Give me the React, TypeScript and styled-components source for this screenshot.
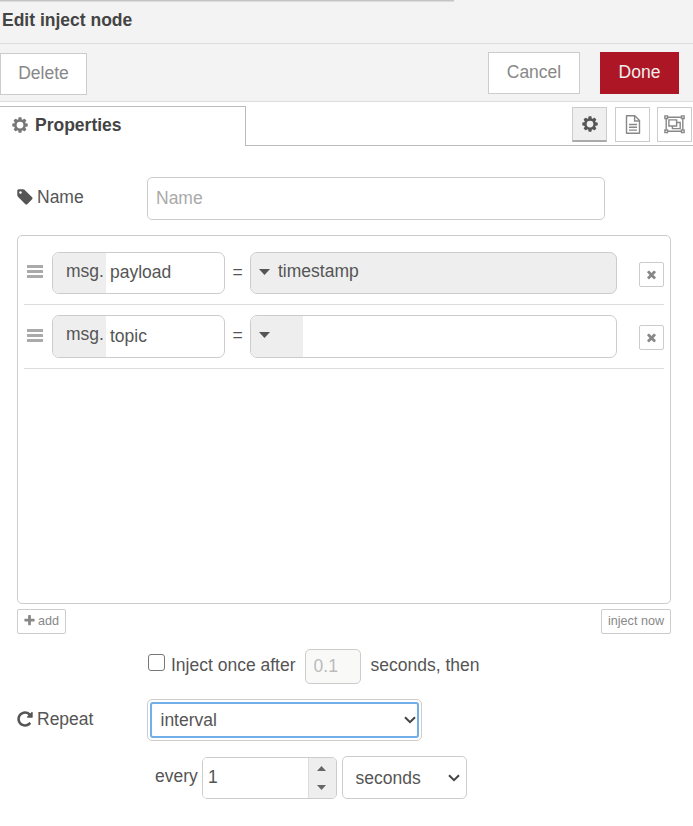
import React from "react";
import styled, { createGlobalStyle, css } from "styled-components";

const GlobalStyle = createGlobalStyle`
  * { box-sizing: border-box; }
  body {
    margin: 0;
    background: #fff;
    color: #555;
    font: 17.5px/20px "Liberation Sans", Arial, sans-serif;
  }
  input, select, button { font: inherit; color: inherit; margin: 0; }
`;

const glyphs = {
  cog: "M1232 896a336 336 0 1 0 -672 0a336 336 0 1 0 672 0zm432-109v222q0 12-8 23t-20 13l-185 28q-19 54-39 91 35 50 107 138 10 12 10 25t-9 23q-27 37-99 108t-94 71q-12 0-26-9l-138-108q-44 23-91 38-16 136-29 186-7 28-36 28h-222q-14 0-24.5-8.5t-11.5-21.5l-28-184q-49-16-90-37l-141 107q-10 9-25 9-14 0-25-11-126-114-165-168-7-10-7-23 0-12 8-23 15-21 51-66.5t54-70.5q-27-50-41-99l-183-27q-13-2-21-12.5t-8-23.5v-222q0-12 8-23t19-13l186-28q14-46 39-92-40-57-107-138-10-12-10-24 0-10 9-23 26-36 98.5-107.5t94.5-71.5q13 0 26 10l138 107q44-23 91-38 16-136 29-186 7-28 36-28h222q14 0 24.5 8.5t11.5 21.5l28 184q49 16 90 37l142-107q9-9 24-9 13 0 25 10 129 119 165 170 7 8 7 22 0 12-8 23-15 21-51 66.5t-54 70.5q26 50 41 98l183 28q13 2 21 12.5t8 23.5z",
  tag: "M576 448q0-53-37.5-90.5t-90.5-37.5-90.5 37.5-37.5 90.5 37.5 90.5 90.5 37.5 90.5-37.5 37.5-90.5zm1067 576q0 53-37 90l-491 492q-39 37-91 37-53 0-90-37l-715-716q-38-37-64.5-101t-26.5-117v-416q0-52 38-90t90-38h416q53 0 117 26.5t102 64.5l715 714q37 39 37 91z",
  times: "M1490 1322q0 40-28 68l-136 136q-28 28-68 28t-68-28l-294-294-294 294q-28 28-68 28t-68-28l-136-136q-28-28-28-68t28-68l294-294-294-294q-28-28-28-68t28-68l136-136q28-28 68-28t68 28l294 294 294-294q28-28 68-28t68 28l136 136q28 28 28 68t-28 68l-294 294 294 294q28 28 28 68z",
  plus: "M1600 736v192q0 40-28 68t-68 28h-416v416q0 40-28 68t-68 28h-192q-40 0-68-28t-28-68v-416h-416q-40 0-68-28t-28-68v-192q0-40 28-68t68-28h416v-416q0-40 28-68t68-28h192q40 0 68 28t28 68v416h416q40 0 68 28t28 68z",
  repeat:
    "M1664 256v448q0 26-19 45t-45 19h-448q-42 0-59-40-17-39 14-69l138-138q-148-137-349-137-104 0-198.5 40.5t-163.5 109.5-109.5 163.5-40.5 198.5 40.5 198.5 109.5 163.5 163.5 109.5 198.5 40.5q119 0 225-52t179-147q7-10 23-12 15 0 25 9l137 138q9 8 9.5 20.5t-7.5 22.5q-109 132-264 204.5t-327 72.5q-156 0-298-61t-245-164-164-245-61-298 61-298 164-245 245-164 298-61q147 0 284.5 55.5t244.5 156.5l130-129q29-31 70-14 39 17 39 59z",
};

const IconSvg = styled.svg`
  display: block;
  flex: none;
  fill: currentColor;
  overflow: visible;
`;

const Icon = ({ name, size = 18 }: { name: keyof typeof glyphs; size?: number }) => (
  <IconSvg width={size} height={size} viewBox="0 0 1792 1792">
    <path d={glyphs[name]} />
  </IconSvg>
);

const DocIcon = () => (
  <IconSvg width="16" height="20" viewBox="0 0 16 20">
    <g fill="none" stroke="currentColor" strokeWidth="1.4">
      <path d="M1.5 .8H9.8L14.5 5.5V18.2H1.5z" strokeLinejoin="round" />
      <path d="M9.6 1V6H14.4M4 9.5H12M4 12.3H12M4 15.1H12" />
    </g>
  </IconSvg>
);

const GroupIcon = () => (
  <IconSvg width="21" height="19" viewBox="0 0 21 19">
    <g fill="none" stroke="currentColor" strokeWidth="1.4">
      <path d="M4 2.2H17M4 16.3H17M2.2 4V14.6M18.8 4V14.6" />
      <path d="M.9 .9h2.6v2.6H.9zM17.5 .9h2.6v2.6h-2.6zM.9 15h2.6v2.6H.9zM17.5 15h2.6v2.6h-2.6z" />
      <path d="M4.9 4.9H12.6V11H4.9zM13 7.5H16.2V13.6H8.4V11.4" />
    </g>
  </IconSvg>
);

const BarsIcon = () => (
  <IconSvg width="16" height="14" viewBox="0 0 16 14">
    <path d="M0 0h16v3H0zM0 5h16v3H0zM0 10h16v3H0z" />
  </IconSvg>
);

const CaretIcon = ({ up = false, w = 11, h = 6 }) => (
  <IconSvg width={w} height={h} viewBox="0 0 10 6" preserveAspectRatio="none">
    <path d={up ? "M0 6h10L5 0z" : "M0 0h10L5 6z"} />
  </IconSvg>
);

const Chevron = () => (
  <IconSvg width="12" height="8" viewBox="0 0 12 8">
    <path d="M1 1.2L6 6.2L11 1.2" fill="none" stroke="#444" strokeWidth="2" />
  </IconSvg>
);

const Tray = styled.main`
  width: 693px;
  height: 826px;
  overflow: hidden;
  background: #fff;
`;

const Header = styled.header`
  height: 44px;
  padding: 10px 2px 0;
  background: #f3f3f3 linear-gradient(#c4c4c4, #c4c4c4) 0 0 / 454px 1.5px no-repeat;
  border-bottom: 1px solid #ddd;
  color: #444;
  font-weight: bold;
`;

const Toolbar = styled.div`
  display: flex;
  align-items: flex-start;
  height: 58px;
  padding: 8px 14px 0 0;
  gap: 20px;
  background: #f3f3f3;
  border-bottom: 1px solid #ddd;
`;

const ToolButton = styled.button<{ $w: number; $primary?: boolean; $start?: boolean }>`
  width: ${(p) => p.$w}px;
  height: 42px;
  padding: 0 0 2px;
  border: 1px solid #ccc;
  background: #fff;
  color: #888;
  ${(p) => p.$primary && css`border-color: #ad1625; background: #ad1625; color: #eee;`}
  ${(p) => p.$start && css`margin: 1px auto 0 0;`}
`;

const TabBar = styled.nav`
  display: flex;
  height: 44px;
  padding-top: 4px;
`;

const Tab = styled.div`
  display: flex;
  align-items: flex-start;
  gap: 6px;
  width: 246px;
  height: 40px;
  padding: 8px 0 0 11px;
  border: solid #bbb;
  border-width: 1px 1px 0 0;
  color: #444;
  font-weight: bold;

  svg { margin-top: 1px; color: #777; }
`;

const TabActions = styled.div`
  display: flex;
  flex: 1;
  justify-content: flex-end;
  gap: 8px;
  height: 40px;
  padding: 1px 1px 0 0;
  border-bottom: 1px solid #bbb;
`;

const TabAction = styled.button<{ $active?: boolean }>`
  display: flex;
  align-items: center;
  justify-content: center;
  width: 35px;
  height: 35px;
  padding: 0;
  border: 1px solid #ccc;
  background: #fff;
  color: #888;
  ${(p) => p.$active && css`background: #efefef; border-bottom: 2px solid #aaa; color: #555;`}
  &:last-child { margin-left: -1px; padding-bottom: 1px; }
`;

const Form = styled.form`
  padding: 31px 22px 0 17px;
`;

const FormRow = styled.div<{ $gap?: number; $indent?: number }>`
  display: flex;
  align-items: center;
  margin-top: ${(p) => p.$gap ?? 0}px;
  padding-left: ${(p) => p.$indent ?? 0}px;
`;

const Label = styled.label<{ $lift?: number }>`
  display: flex;
  align-items: center;
  gap: 3px;
  width: 130px;
  padding-bottom: ${(p) => p.$lift ?? 4}px;
  svg { margin-left: -1px; }
`;

const TextInput = styled.input`
  width: 458px;
  height: 43px;
  padding: 0 7px 1px 8px;
  border: 1px solid #ccc;
  border-radius: 5px;
  background: #fff;
  outline: 0;
  &::placeholder { color: #aaa; opacity: 1; }
`;

const DelayInput = styled(TextInput)`
  width: 56px;
  height: 35px;
  margin: 0 10px 0 9px;
  background: #f9f9f7;
  &:disabled { color: #bbb; }
`;

const RuleList = styled.ul`
  height: 369px;
  margin: 15px 0 0;
  padding: 5px 6px;
  width: 654px;
  border: 1px solid #ccc;
  border-radius: 5px;
  list-style: none;
`;

const RuleItem = styled.li<{ $h: number; $top: number }>`
  display: flex;
  align-items: flex-start;
  height: ${(p) => p.$h}px;
  padding-top: ${(p) => p.$top}px;
  border-bottom: 1px solid #ddd;
`;

const Handle = styled.span<{ $top?: number }>`
  width: 28px;
  padding: ${(p) => p.$top ?? 13}px 0 0 3px;
  color: #aaa;
`;

const TypedField = styled.div<{ $w: number; $h: number; $filled?: boolean }>`
  display: flex;
  width: ${(p) => p.$w}px;
  height: ${(p) => p.$h}px;
  border: 1px solid #ccc;
  border-radius: 7px;
  background: ${(p) => (p.$filled ? "#eee" : "#fff")};
  overflow: hidden;
`;

const TypePrefix = styled.span<{ $w: number }>`
  display: flex;
  align-items: flex-start;
  width: ${(p) => p.$w}px;
  padding: 8px 0 0 13px;
  background: #eee;
  svg { margin: 8px 0 0 -5px; }
`;

const TypeValue = styled.span<{ $top?: number }>`
  padding: ${(p) => p.$top ?? 9}px 0 0 4px;
`;

const OptionLabel = styled.span`
  padding-top: 8px;
  margin-left: -25px;
`;

const Equals = styled.span`
  width: 25px;
  padding-top: 10px;
  text-align: center;
`;

const SmallButton = styled.button<{ $w: number }>`
  display: flex;
  align-items: center;
  justify-content: center;
  gap: 2px;
  width: ${(p) => p.$w}px;
  height: 25px;
  padding: 0 0 2px;
  border: 1px solid #ccc;
  border-radius: 2px;
  background: #fff;
  color: #888;
  font-size: 12.6px;
  svg { margin-left: -1px; }
`;

const RemoveButton = styled(SmallButton)<{ $top?: number }>`
  margin: ${(p) => p.$top ?? 10}px 0 0 auto;
  padding: 0 0 1px;
  svg { margin-left: 0; }
`;

const ListFooter = styled.div`
  display: flex;
  justify-content: space-between;
  width: 654px;
  margin-top: 5px;
`;

const Checkbox = styled.input`
  appearance: none;
  width: 17px;
  height: 17px;
  margin: -8px 6px 0 1px;
  border: 1.5px solid #777;
  border-radius: 3px;
  background: #fff;
`;

const InlineText = styled.span<{ $w?: number }>`
  width: ${(p) => (p.$w ? p.$w + "px" : "auto")};
  padding-bottom: 3px;
  white-space: nowrap;
`;

const SelectFrame = styled.div<{ $w: number; $h: number }>`
  display: flex;
  width: ${(p) => p.$w}px;
  height: ${(p) => p.$h}px;
  padding: 2px;
  border: 1px solid #ccc;
  border-radius: 5px;
`;

const SelectBody = styled.div<{ $focus?: boolean }>`
  display: flex;
  align-items: center;
  flex: 1;
  padding: 0 ${(p) => (p.$focus ? 1 : 2)}px 0 8px;
  border: 2px solid ${(p) => (p.$focus ? "#72aee8" : "transparent")};
  border-radius: 3px;
`;

const NativeSelect = styled.select`
  appearance: none;
  flex: 1;
  min-width: 0;
  height: 26px;
  padding: 0 0 0 0.5px;
  border: 0;
  outline: 0;
  background: transparent;
`;

const Spinner = styled.div`
  display: flex;
  width: 135px;
  height: 42px;
  margin: 1px 5px 0 0;
  border: 1px solid #ccc;
  border-radius: 5px;
  overflow: hidden;
`;

const SpinnerValue = styled.input`
  width: 105px;
  padding: 0 0 2px 5px;
  border: 0;
  outline: 0;
`;

const SpinnerButtons = styled.div`
  display: flex;
  flex: 1;
  flex-direction: column;
  align-items: center;
  justify-content: space-between;
  padding: 8px 2px 8px 0;
  border-left: 1px solid #ddd;
  background: #eee;
  color: #666;
`;

export default function App() {
  return (
    <Tray>
      <GlobalStyle />
      <Header>Edit inject node</Header>
      <Toolbar>
        <ToolButton $w={87} $start>Delete</ToolButton>
        <ToolButton $w={92}>Cancel</ToolButton>
        <ToolButton $w={79} $primary>Done</ToolButton>
      </Toolbar>
      <TabBar>
        <Tab>
          <Icon name="cog" />
          Properties
        </Tab>
        <TabActions>
          <TabAction $active><Icon name="cog" /></TabAction>
          <TabAction><DocIcon /></TabAction>
          <TabAction><GroupIcon /></TabAction>
        </TabActions>
      </TabBar>
      <Form>
        <FormRow>
          <Label><Icon name="tag" />Name</Label>
          <TextInput placeholder="Name" />
        </FormRow>
        <RuleList>
          <RuleItem $h={64} $top={11}>
            <Handle><BarsIcon /></Handle>
            <TypedField $w={173} $h={42}>
              <TypePrefix $w={53}>msg.</TypePrefix>
              <TypeValue>payload</TypeValue>
            </TypedField>
            <Equals>=</Equals>
            <TypedField $w={367} $h={42} $filled>
              <TypePrefix $w={52}><CaretIcon /></TypePrefix>
              <OptionLabel>timestamp</OptionLabel>
            </TypedField>
            <RemoveButton type="button" $w={25}><Icon name="times" size={13} /></RemoveButton>
          </RuleItem>
          <RuleItem $h={64} $top={10}>
            <Handle $top={14}><BarsIcon /></Handle>
            <TypedField $w={173} $h={43}>
              <TypePrefix $w={53}>msg.</TypePrefix>
              <TypeValue $top={10}>topic</TypeValue>
            </TypedField>
            <Equals>=</Equals>
            <TypedField $w={367} $h={43}>
              <TypePrefix $w={52}><CaretIcon /></TypePrefix>
            </TypedField>
            <RemoveButton type="button" $w={25}><Icon name="times" size={13} /></RemoveButton>
          </RuleItem>
        </RuleList>
        <ListFooter>
          <SmallButton type="button" $w={49}><Icon name="plus" size={13} /> add</SmallButton>
          <SmallButton type="button" $w={70}>inject now</SmallButton>
        </ListFooter>
        <FormRow $gap={15} $indent={130}>
          <Checkbox type="checkbox" />
          <InlineText>Inject once after</InlineText>
          <DelayInput defaultValue="0.1" disabled />
          <InlineText>seconds, then</InlineText>
        </FormRow>
        <FormRow $gap={15}>
          <Label $lift={2}><Icon name="repeat" />Repeat</Label>
          <SelectFrame $w={275} $h={42}>
            <SelectBody $focus>
              <NativeSelect defaultValue="interval"><option>interval</option></NativeSelect>
              <Chevron />
            </SelectBody>
          </SelectFrame>
        </FormRow>
        <FormRow $gap={15} $indent={138}>
          <InlineText $w={47}>every</InlineText>
          <Spinner>
            <SpinnerValue defaultValue="1" />
            <SpinnerButtons>
              <CaretIcon up w={9} h={5} />
              <CaretIcon w={9} h={5} />
            </SpinnerButtons>
          </Spinner>
          <SelectFrame $w={125} $h={43}>
            <SelectBody>
              <NativeSelect defaultValue="seconds"><option>seconds</option></NativeSelect>
              <Chevron />
            </SelectBody>
          </SelectFrame>
        </FormRow>
      </Form>
    </Tray>
  );
}
